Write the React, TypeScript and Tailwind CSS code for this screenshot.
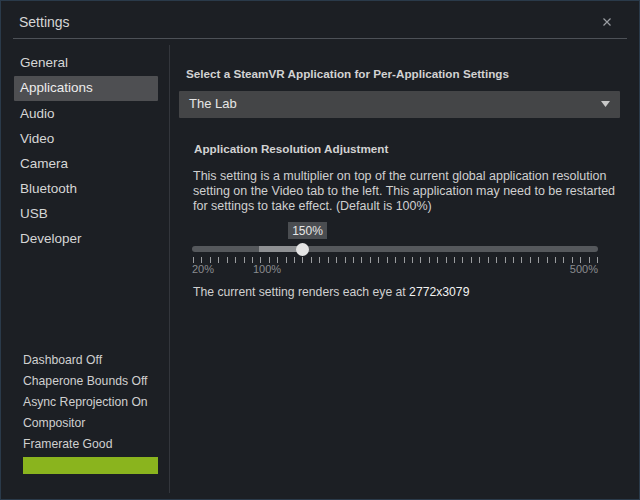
import React from "react";

const menu = ["General", "Applications", "Audio", "Video", "Camera", "Bluetooth", "USB", "Developer"];
const status = ["Dashboard Off", "Chaperone Bounds Off", "Async Reprojection On", "Compositor", "Framerate Good"];

export default function App() {
  const ticks = Array.from({ length: 49 }, (_, i) => i);
  return (
    <div
      className="w-[640px] h-[500px] bg-[#1c1f24] border border-[#2a3a4a] flex flex-col text-[#d6d6d6] overflow-hidden"
      style={{ fontFamily: '"Liberation Sans", Arial, sans-serif' }}
    >
      <div className="flex items-center justify-between h-[37px] pl-[12px] pr-[28px] pt-[5px]">
        <span className="text-[14px] ml-[6px]">Settings</span>
        <svg width="8" height="8" viewBox="0 0 8 8">
          <path d="M0.5 0.5 L7.5 7.5 M7.5 0.5 L0.5 7.5" stroke="#9a9da2" strokeWidth="1.2" />
        </svg>
      </div>
      <div className="mx-[12px] h-px bg-[#4d5157]" />
      <div className="flex flex-1 min-h-0">
        <div className="w-[157px] shrink-0 flex flex-col justify-between pl-[13px] pt-[12px] pb-[25px]">
          <div className="flex flex-col">
            {menu.map((m) => (
              <div
                key={m}
                className={`h-[25px] flex items-center pl-[6px] text-[13.5px] ${m === "Applications" ? "bg-[#4e4f52] text-[#ececec] rounded-[1px] h-[24px] mb-px" : "text-[#d6d6d6]"}`}
              >
                {m}
              </div>
            ))}
          </div>
          <div className="flex flex-col pl-[9px]">
            {status.map((s) => (
              <div key={s} className="h-[21px] flex items-center text-[12.2px] text-[#d0d0d0]">
                {s}
              </div>
            ))}
            <div className="h-[17px] mt-[2px] bg-[#8ab41e]" />
          </div>
        </div>
        <div className="w-px bg-[#33363c] my-[6px] ml-[11px]" />
        <div className="flex-1 pl-[9px] pr-[19px] pt-[26px]">
          <div className="text-[11.7px] font-bold text-[#d2d2d2] pl-[7px]">
            Select a SteamVR Application for Per-Application Settings
          </div>
          <div className="mt-[8px] h-[27px] bg-[#444547] rounded-[1px] flex items-center justify-between pl-[10px] pr-[10px]">
            <span className="text-[13px] text-[#e6e6e6]">The Lab</span>
            <svg width="9" height="6" viewBox="0 0 9 6">
              <path d="M0 0 L9 0 L4.5 6 Z" fill="#c8c8c8" />
            </svg>
          </div>
          <div className="pl-[14px] pr-[2px] mt-[22px]">
            <div className="text-[11.7px] font-bold text-[#d2d2d2] pl-px">Application Resolution Adjustment</div>
            <p className="mt-[12px] text-[12.5px] leading-[15px] text-[#d0d0d0]">
              This setting is a multiplier on top of the current global application resolution setting on the Video tab to the
              left. This application may need to be restarted for settings to take effect. (Default is 100%)
            </p>
            <div className="relative mt-[8px] -ml-px w-[406px] h-[56px]">
              <div className="absolute left-[96px] top-0 w-[39px] h-[17px] bg-[#4a4d51] flex items-center justify-center text-[12px] text-[#e6e6e6]">
                150%
              </div>
              <div className="absolute left-0 top-[24px] w-[406px] h-[6px] rounded-full bg-[#55585c]" />
              <div className="absolute left-[67px] top-[24px] w-[44px] h-[6px] bg-[#8e9093]" />
              <div className="absolute left-[104px] top-[21px] w-[13px] h-[13px] rounded-full bg-[#e4e4e4]" />
              {ticks.map((i) => (
                <div
                  key={i}
                  className="absolute top-[35px] w-px h-[6px] bg-[#9a9c9f]"
                  style={{ left: 1 + i * 8.42 }}
                />
              ))}
              <div className="absolute left-0 top-[39px] text-[11px] text-[#8a8c8f]">20%</div>
              <div className="absolute left-[61px] top-[39px] text-[11px] text-[#8a8c8f]">100%</div>
              <div className="absolute right-0 top-[39px] text-[11px] text-[#8a8c8f]">500%</div>
            </div>
            <div className="mt-[5px] text-[12.2px] text-[#d0d0d0]">
              The current setting renders each eye at <span className="text-[#f2f2f2]">2772x3079</span>
            </div>
          </div>
        </div>
      </div>
    </div>
  );
}
